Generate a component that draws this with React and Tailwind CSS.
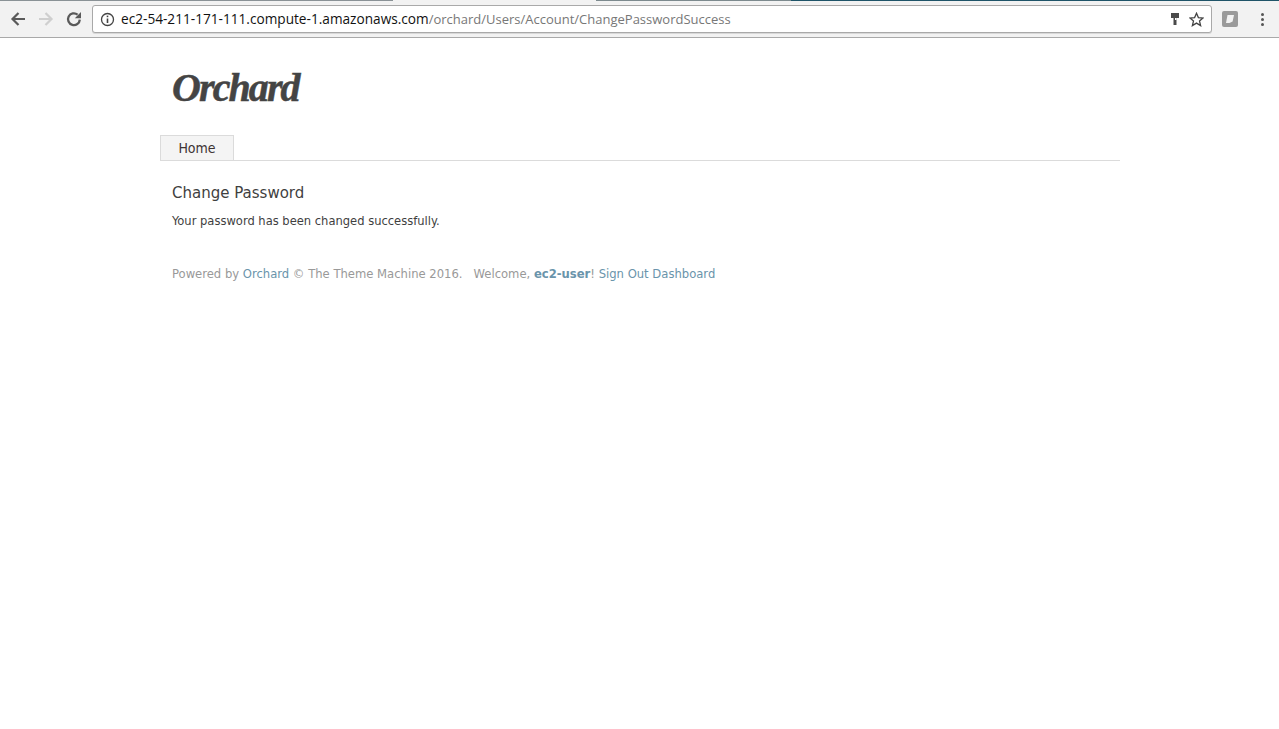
import React from "react";

function Toolbar() {
  return (
    <div className="relative flex h-[38px] items-center bg-[#f2f2f2] border-b border-[#a9a9a9] pt-[1px]">
      <div className="absolute left-0 right-0 top-0 flex h-[1px]">
        <div className="w-[393px] bg-[#8a9296]" />
        <div className="w-[203px] bg-[#f2f2f2]" />
        <div className="w-[195px] bg-[#7d8a8e]" />
        <div className="flex-1 bg-[#1f5468]" />
      </div>
      <div className="flex w-[92px] shrink-0 items-center">
        <svg className="ml-[10px]" width="16" height="16" viewBox="0 0 16 16" fill="none" stroke="#5a5a5a" strokeWidth="2.2"><path d="M15 8H2.5M8.5 2 2.5 8l6 6" /></svg>
        <svg className="ml-[12px]" width="16" height="16" viewBox="0 0 16 16" fill="none" stroke="#cfcfcf" strokeWidth="2.2"><path d="M1 8h12.5M7.5 2l6 6-6 6" /></svg>
        <svg className="ml-[12px]" width="16" height="16" viewBox="0 0 16 16" fill="none" stroke="#5a5a5a" strokeWidth="2.3"><path d="M13.8 8.6A5.9 5.9 0 1 1 11.6 3.6" /><path d="M15 1v6.2H8.8z" fill="#5a5a5a" stroke="none" /></svg>
      </div>
      <div className="flex h-[28px] w-[1120px] shrink-0 items-center rounded-[3px] border border-[#a9a9a9] bg-white shadow-[0_1px_0_#d8d8d8]">
        <svg className="ml-[7px]" width="15" height="15" viewBox="0 0 15 15" fill="none" stroke="#444" strokeWidth="1.3"><circle cx="7.5" cy="7.5" r="6" /><path d="M7.5 6.5v4.5" strokeWidth="1.6" /><path d="M7.5 3.6v1.6" strokeWidth="1.6" /></svg>
        <span className="ml-[6px] whitespace-nowrap font-['Open_Sans',sans-serif] font-stretch-normal text-[13.65px] text-[#111]">
          ec2-54-211-171-111.compute-1.amazonaws.com<span className="text-[13px] text-[#777]">/orchard/Users/Account/ChangePasswordSuccess</span>
        </span>
        <div className="ml-auto flex items-center">
          <svg width="12" height="14" viewBox="0 0 12 14" fill="#4a4a4a" className="-ml-[3px] mr-[1px]"><path d="M2 1h8v5H7.5v7h-3V6H2z" /><path d="M6 6h1.5v2H6z" fill="#fff" /></svg>
          <svg className="ml-[7px] mr-[7px]" width="15" height="15" viewBox="0 0 15 15" fill="none" stroke="#444" strokeWidth="1.3"><path d="M7.5 1.3 9.4 5.6l4.6.4-3.5 3 1.1 4.6-4.1-2.5-4.1 2.5L4.5 9 1 6l4.6-.4z" /></svg>
        </div>
      </div>
      <div className="ml-[10px] flex h-[16px] w-[16px] shrink-0 items-center justify-center rounded-[2px] bg-[#9a9a9a]">
        <svg width="10" height="10" viewBox="0 0 10 10" fill="#f2f2f2"><path d="M2.5 1H9L7.6 7.5 4.5 9H1z" /></svg>
      </div>
      <div className="ml-[23px] flex shrink-0 flex-col gap-[2px]">
        <div className="h-[3px] w-[3px] rounded-full bg-[#555]" />
        <div className="h-[3px] w-[3px] rounded-full bg-[#555]" />
        <div className="h-[3px] w-[3px] rounded-full bg-[#555]" />
      </div>
    </div>
  );
}

export default function App() {
  return (
    <div className="min-h-[729px] bg-white font-['DejaVu_Sans',sans-serif] font-stretch-condensed">
      <Toolbar />
      <div className="ml-[160px] w-[960px]">
        <div className="h-[97px] pl-[12px] pt-[26px]">
          <div className="font-['Liberation_Serif',serif] text-[40px] font-bold italic leading-[48px] tracking-[-1.9px] text-[#444444] [-webkit-text-stroke:0.5px_#444444]">Orchard</div>
        </div>
        <div className="flex h-[26px] border-b border-[#dbdbdb]">
          <div className="flex h-[26px] w-[74px] items-center justify-center border border-[#dbdbdb] bg-[#f4f4f4] text-[14px] text-[#3d3333]">Home</div>
        </div>
        <div className="pl-[12px]">
          <h1 className="mt-[20px] text-[16.7px] leading-[22px] text-[#3f3f3f]">Change Password</h1>
          <p className="mt-[8px] text-[12.8px] leading-[20px] text-[#3f3f3f]">Your password has been changed successfully.</p>
          <p className="mt-[33px] whitespace-pre text-[12.9px] leading-[20px] text-[#999]">
            Powered by <span className="text-[#6a94ab]">Orchard</span> © The Theme Machine 2016.{"   "}Welcome, <span className="font-bold text-[#6a94ab]">ec2-user</span>! <span className="text-[#6a94ab]">Sign Out</span> <span className="text-[#6a94ab]">Dashboard</span>
          </p>
        </div>
      </div>
    </div>
  );
}
